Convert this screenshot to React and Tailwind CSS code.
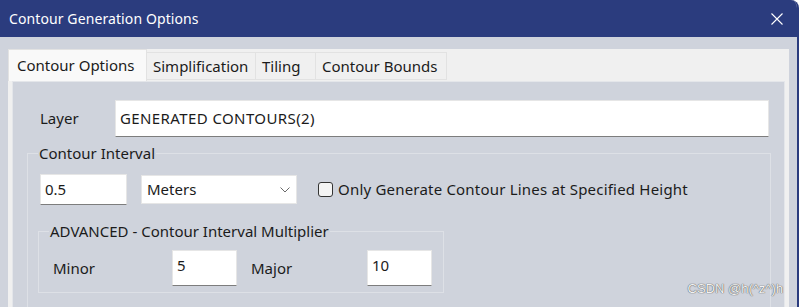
import React from 'react';

const FONT = "font-['Noto_Sans',sans-serif]";

function Field({ value, className = '' }) {
  return (
    <div className={`bg-white border border-[#e6e6e6] border-b-[#7d7d7d] flex items-center px-[4px] text-[15px] text-[#1b1b1b] ${className}`}>
      {value}
    </div>
  );
}

function Tab({ label, active, className = '' }) {
  return active ? (
    <div className={`h-[32px] flex items-center px-[8px] bg-[#f9f9f9] border border-[#e2e2e2] border-b-0 text-[15px] text-[#1b1b1b] ${className}`}>{label}</div>
  ) : (
    <div className={`h-[28px] mt-[3px] flex items-center px-[6px] bg-[#f0f0f0] border border-[#e2e2e2] border-l-0 text-[15px] text-[#1b1b1b] ${className}`}>{label}</div>
  );
}

export default function App() {
  return (
    <div className={`w-[799px] h-[307px] overflow-hidden bg-white ${FONT}`}>
      <div className="h-full flex flex-col rounded-tr-[8px] overflow-hidden bg-[#cfd3dc] border-r-[2px] border-[#2b3c7e] relative">
        {/* title bar */}
        <div className="h-[37px] bg-[#2b3c7e] flex items-center justify-between pl-[9px] pr-[14px] shrink-0">
          <span className="text-white text-[14px] tracking-[0.1px]">Contour Generation Options</span>
          <svg width="12" height="12" viewBox="0 0 12 12">
            <path d="M0.5 0.5L11.5 11.5M11.5 0.5L0.5 11.5" stroke="#fff" strokeWidth="1.1" />
          </svg>
        </div>

        {/* tab control */}
        <div className="flex-1 pl-[8px] pr-[8px] pt-[12px] min-h-0">
          <div className="h-full bg-[#f0f0f0] flex flex-col">
            <div className="flex items-start h-[32px] shrink-0">
              <Tab label="Contour Options" active className="w-[139px]" />
              <Tab label="Simplification" className="w-[109px]" />
              <Tab label="Tiling" className="w-[60px]" />
              <Tab label="Contour Bounds" className="w-[131px]" />
            </div>
            <div className="flex-1 mx-[4px] bg-[#cfd3dc] border-x border-t border-[#e4e6ea] pt-[18px] text-[15px] text-[#1b1b1b]">
              {/* layer */}
              <div className="flex items-center">
                <span className="w-[102px] pl-[27px]">Layer</span>
                <Field value="GENERATED CONTOURS(2)" className="w-[654px] h-[37px] tracking-[0.4px]" />
              </div>

              {/* contour interval */}
              <fieldset className="ml-[14px] w-[744px] mt-[6px] border border-[#dde0e6] border-b-0 pb-[40px]">
                <legend className="ml-[10px] px-[1px] leading-[20px]">Contour Interval</legend>
                <div className="flex items-center mt-[11px] pl-[12px]">
                  <Field value="0.5" className="w-[87px] h-[31px]" />
                  <div className="ml-[14px] w-[156px] h-[29px] bg-white border border-[#e6e6e6] flex items-center justify-between pl-[5px] pr-[6px]">
                    <span>Meters</span>
                    <svg width="10" height="6" viewBox="0 0 10 6">
                      <path d="M0.5 0.5L5 5L9.5 0.5" stroke="#6a6a6a" strokeWidth="1" fill="none" />
                    </svg>
                  </div>
                  <div className="ml-[21px] w-[15px] h-[15px] rounded-[3px] border border-[#333] bg-[#f4f4f4]" />
                  <span className="ml-[5px] tracking-[0.2px]">Only Generate Contour Lines at Specified Height</span>
                </div>

                {/* advanced */}
                <fieldset className="ml-[10px] w-[406px] mt-[16px] border border-[#dde0e6] pb-[6px]">
                  <legend className="ml-[10px] px-[1px] leading-[20px]">ADVANCED - Contour Interval Multiplier</legend>
                  <div className="flex items-center mt-[9px]">
                    <span className="w-[133px] pl-[14px]">Minor</span>
                    <Field value="5" className="w-[65px] h-[36px] items-start pt-[3px]" />
                    <span className="w-[130px] pl-[14px]">Major</span>
                    <Field value="10" className="w-[65px] h-[36px] items-start pt-[3px]" />
                  </div>
                </fieldset>
              </fieldset>
            </div>
          </div>
        </div>

        <span className="absolute right-[14px] bottom-[9px] font-['Liberation_Sans',sans-serif] text-[13px] text-[#f2f2f2] [text-shadow:0_0_1px_#555,0_0_1px_#555]">CSDN @h(^z^)h</span>
      </div>
    </div>
  );
}
